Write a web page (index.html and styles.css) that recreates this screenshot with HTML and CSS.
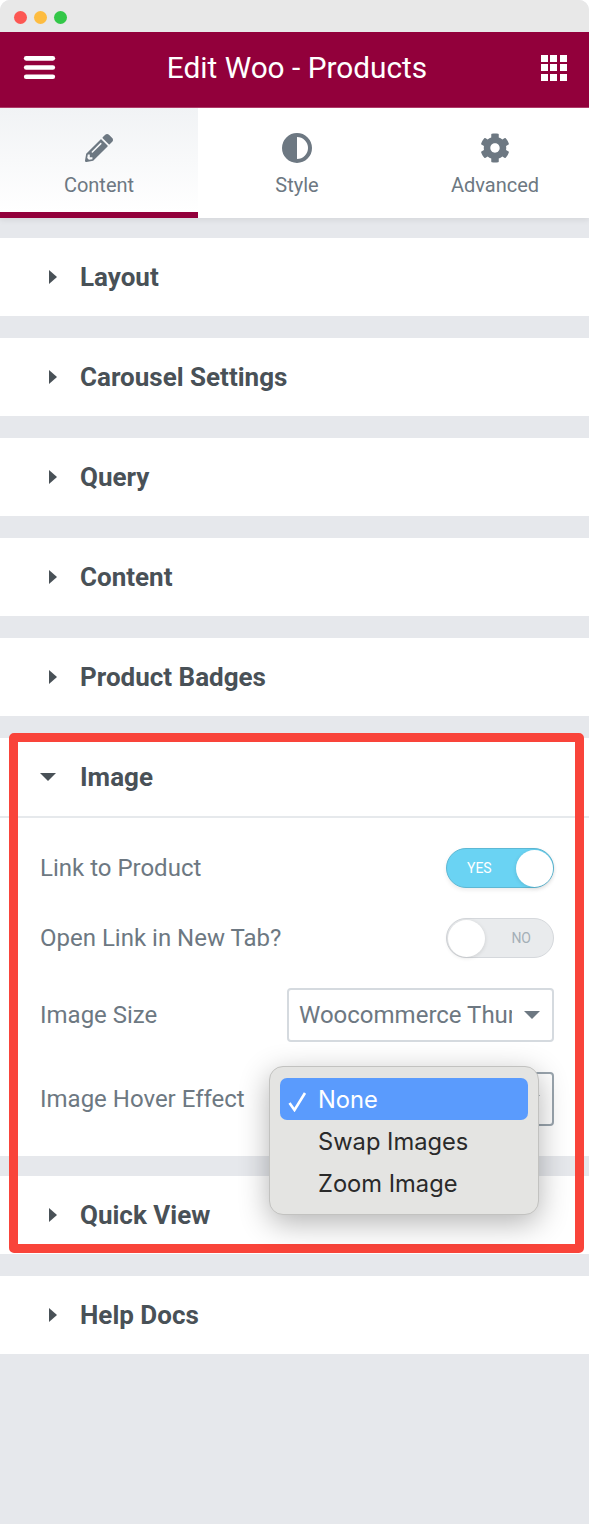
FILE: index.html
```html
<!DOCTYPE html>
<html lang="en">
<head>
    <meta charset="UTF-8">
    <meta name="viewport" content="width=device-width, initial-scale=1.0">
    <title>Edit Woo - Products</title>
    <link rel="stylesheet" href="styles.css">
</head>
<body>
    <div class="window">
        <div class="titlebar">
            <span class="dot dot-red"></span>
            <span class="dot dot-yellow"></span>
            <span class="dot dot-green"></span>
        </div>

        <header class="topbar">
            <svg class="menu-icon" viewBox="0 0 30 24" width="33" height="25">
                <rect x="0" y="1" width="30" height="4.4" rx="2.2"/>
                <rect x="0" y="9.8" width="30" height="4.4" rx="2.2"/>
                <rect x="0" y="18.6" width="30" height="4.4" rx="2.2"/>
            </svg>
            <h1>Edit Woo - Products</h1>
            <div class="apps-icon">
                <i></i><i></i><i></i><i></i><i></i><i></i><i></i><i></i><i></i>
            </div>
        </header>

        <nav class="tabs">
            <div class="tab active">
                <svg viewBox="0 0 512 512" width="28" height="28"><path d="M497.9 142.1l-46.100 46.100c-4.700 4.700-12.300 4.700-17 0l-111-111c-4.700-4.700-4.700-12.300 0-17l46.100-46.100c18.700-18.700 49.100-18.700 67.900 0l60.100 60.100c18.800 18.700 18.800 49.100 0 67.900zM284.200 99.800L21.600 362.400.4 483.900c-2.900 16.400 11.400 30.600 27.800 27.800l121.500-21.300 262.600-262.600c4.700-4.700 4.700-12.300 0-17l-111-111c-4.800-4.700-12.400-4.700-17.100 0zM124.100 339.900c-5.500-5.500-5.500-14.300 0-19.800l154-154c5.500-5.500 14.300-5.500 19.800 0s5.500 14.300 0 19.800l-154 154c-5.500 5.500-14.300 5.500-19.800 0zM88 424h48v36.300l-64.500 11.300-31.100-31.100L51.700 376H88v48z"/></svg>
                <span>Content</span>
            </div>
            <div class="tab">
                <svg viewBox="0 0 30 30" width="30" height="30"><path fill-rule="evenodd" d="M15 0a15 15 0 1 0 0 30a15 15 0 0 0 0-30zM15 4a11 11 0 0 1 0 22z"/></svg>
                <span>Style</span>
            </div>
            <div class="tab">
                <svg viewBox="0 0 512 512" width="30" height="30"><path d="M487.400 315.700l-42.600-24.600c4.300-23.200 4.300-47 0-70.200l42.600-24.600c4.900-2.800 7.100-8.600 5.500-14-11.100-35.600-30-67.800-54.700-94.600-3.800-4.100-10-5.100-14.800-2.300L380.800 110c-17.900-15.400-38.500-27.300-60.800-35.100V25.800c0-5.600-3.900-10.500-9.400-11.700-36.700-8.200-74.300-7.800-109.200 0-5.500 1.200-9.400 6.100-9.400 11.700V75c-22.200 7.900-42.800 19.800-60.800 35.100L88.700 85.500c-4.900-2.800-11-1.900-14.800 2.300-24.700 26.700-43.600 58.900-54.700 94.600-1.700 5.400.6 11.200 5.500 14L67.300 221c-4.300 23.200-4.300 47 0 70.200l-42.600 24.600c-4.900 2.800-7.100 8.600-5.500 14 11.100 35.600 30 67.800 54.700 94.600 3.800 4.100 10 5.100 14.800 2.300l42.600-24.600c17.900 15.400 38.500 27.300 60.800 35.100v49.200c0 5.600 3.900 10.500 9.400 11.700 36.700 8.200 74.300 7.800 109.200 0 5.500-1.200 9.400-6.100 9.400-11.700v-49.200c22.200-7.900 42.800-19.800 60.800-35.100l42.600 24.600c4.900 2.800 11 1.900 14.800-2.300 24.700-26.700 43.600-58.900 54.700-94.600 1.500-5.500-.7-11.300-5.600-14.100zM256 336c-44.100 0-80-35.900-80-80s35.900-80 80-80 80 35.900 80 80-35.900 80-80 80z"/></svg>
                <span>Advanced</span>
            </div>
        </nav>

        <main class="sections">
            <section class="section">
                <div class="section-head"><span class="arrow-right"></span><h2>Layout</h2></div>
            </section>
            <section class="section">
                <div class="section-head"><span class="arrow-right"></span><h2>Carousel Settings</h2></div>
            </section>
            <section class="section">
                <div class="section-head"><span class="arrow-right"></span><h2>Query</h2></div>
            </section>
            <section class="section">
                <div class="section-head"><span class="arrow-right"></span><h2>Content</h2></div>
            </section>
            <section class="section">
                <div class="section-head"><span class="arrow-right"></span><h2>Product Badges</h2></div>
            </section>

            <section class="section section-open">
                <div class="section-head"><span class="arrow-down"></span><h2>Image</h2></div>
                <div class="section-body">
                    <div class="control">
                        <label>Link to Product</label>
                        <div class="switch switch-on"><span>YES</span><b></b></div>
                    </div>
                    <div class="control">
                        <label>Open Link in New Tab?</label>
                        <div class="switch switch-off"><b></b><span>NO</span></div>
                    </div>
                    <div class="control control-select">
                        <label>Image Size</label>
                        <div class="select"><span>Woocommerce Thumbnail</span><em></em></div>
                    </div>
                    <div class="control control-select">
                        <label>Image Hover Effect</label>
                        <div class="select select-open"><span></span><em></em></div>
                    </div>
                </div>
            </section>

            <section class="section">
                <div class="section-head"><span class="arrow-right"></span><h2>Quick View</h2></div>
            </section>
            <section class="section">
                <div class="section-head"><span class="arrow-right"></span><h2>Help Docs</h2></div>
            </section>
        </main>

        <div class="highlight"></div>

        <ul class="popup">
            <li class="selected">
                <svg viewBox="0 0 20 20" width="20" height="20"><path d="M1.500 11L6.500 18L17 1" fill="none" stroke="#fff" stroke-width="2.600"/></svg>
                None
            </li>
            <li>Swap Images</li>
            <li>Zoom Image</li>
        </ul>
    </div>
</body>
</html>
```

FILE: styles.css
```css
* {
    margin: 0;
    padding: 0;
    box-sizing: border-box;
}

body {
    background-color: #fff;
    font-family: 'Roboto', 'Liberation Sans', sans-serif;
}

.window {
    position: relative;
    height: 1524px;
    background-color: #e6e8ec;
    border-radius: 10px 10px 0 0;
    overflow: hidden;
}

.titlebar {
    display: flex;
    align-items: center;
    gap: 7px;
    height: 32px;
    padding: 2px 0 0 14px;
    background-color: #e8e8e8;
}

.dot {
    width: 13px;
    height: 13px;
    border-radius: 50%;
}

.dot-red { background-color: #fc5753; }
.dot-yellow { background-color: #fdbc40; }
.dot-green { background-color: #33c748; }

.topbar {
    display: flex;
    align-items: center;
    justify-content: space-between;
    height: 76px;
    padding: 0 22px 0 23px;
    background-color: #92003b;
    border-bottom: 1px solid #b23c6b;
}

.topbar h1 {
    font-size: 29.8px;
    font-weight: 400;
    color: #fff;
    margin: 0 3px 4px 0;
}

.menu-icon {
    fill: #fff;
    margin-bottom: 4px;
}

.apps-icon {
    display: grid;
    grid-template-columns: repeat(3, 7px);
    grid-auto-rows: 7px;
    gap: 2.5px;
    margin-bottom: 4px;
}

.apps-icon i {
    background-color: #fff;
}

.tabs {
    display: flex;
    height: 110px;
    background-color: #fff;
    box-shadow: 0 2px 6px rgba(0, 0, 0, 0.08);
    overflow: hidden;
}

.tab {
    flex: 0 0 198px;
    display: flex;
    flex-direction: column;
    align-items: center;
    justify-content: flex-start;
    height: 110px;
    padding-top: 25px;
    color: #6d7882;
    font-size: 20px;
}

.tab svg {
    fill: #6d7882;
    height: 30px;
    margin-bottom: 10px;
}

.tab.active {
    background: linear-gradient(#f1f3f5, #fff);
    border-bottom: 6px solid #92003b;
}

.sections {
    display: flex;
    flex-direction: column;
    gap: 22px;
    padding-top: 20px;
}

.section {
    background-color: #fff;
}

.section-head {
    display: flex;
    align-items: center;
    height: 78px;
    color: #495157;
}

.section-head h2 {
    font-size: 26px;
    font-weight: 700;
    margin-left: 23px;
}

.arrow-right {
    width: 0;
    height: 0;
    margin-left: 49px;
    border-left: 8px solid #495157;
    border-top: 7px solid transparent;
    border-bottom: 7px solid transparent;
}

.arrow-down {
    width: 0;
    height: 0;
    margin-left: 40px;
    border-top: 8px solid #495157;
    border-left: 8px solid transparent;
    border-right: 8px solid transparent;
}

.section-open .section-head h2 {
    margin-left: 24px;
}

.section-open {
    margin-bottom: -2px;
}

.section-body {
    height: 340px;
    padding: 30px 35px 0 40px;
    border-top: 2px solid #e6e9ec;
}

.control {
    display: flex;
    align-items: center;
    justify-content: space-between;
    height: 40px;
    margin-bottom: 30px;
    color: #6d7882;
    font-size: 24px;
}

.control-select {
    height: 54px;
}

.control label {
    font-size: 24px;
}

.switch {
    display: flex;
    align-items: center;
    justify-content: space-between;
    width: 108px;
    height: 40px;
    border-radius: 20px;
    font-size: 14px;
}

.switch b {
    width: 37px;
    height: 37px;
    border-radius: 50%;
    background-color: #fff;
    box-shadow: 0 1px 4px rgba(0, 0, 0, 0.12);
}

.switch-on {
    padding: 0 0 0 20px;
    background-color: #6ad3f3;
    border: 1px solid #5db8d4;
    color: #fff;
    box-shadow: 0 2px 4px rgba(0, 0, 0, 0.08);
}

.switch-off {
    padding: 0 22px 0 1px;
    background-color: #e9ebed;
    border: 1px solid #d5d8dc;
    color: #a4afb7;
}

.select {
    display: flex;
    align-items: center;
    justify-content: space-between;
    width: 267px;
    height: 54px;
    padding: 0 12px 0 10px;
    border: 2px solid #d5dadf;
    border-radius: 4px;
    color: #6d7882;
    font-size: 24px;
}

.select-open {
    border-color: #9aa5ae;
}

.select span {
    width: 213px;
    overflow: hidden;
    white-space: nowrap;
}

.select em {
    width: 0;
    height: 0;
    border-top: 8px solid #6d7882;
    border-left: 8px solid transparent;
    border-right: 8px solid transparent;
}

.highlight {
    position: absolute;
    left: 9px;
    top: 733px;
    width: 575px;
    height: 520px;
    border: 9px solid #f9443a;
    border-radius: 5px;
    pointer-events: none;
}

.popup {
    position: absolute;
    left: 269px;
    top: 1066px;
    width: 270px;
    height: 149px;
    padding: 11px 10px 0;
    list-style: none;
    background-color: #e4e4e2;
    border: 1px solid #c2c2c0;
    border-radius: 14px;
    box-shadow: 0 8px 30px rgba(0, 0, 0, 0.3);
    color: #2a2a2a;
    font-family: 'Inter', 'Liberation Sans', sans-serif;
    font-size: 23.7px;
}

.popup li {
    position: relative;
    display: flex;
    align-items: center;
    height: 42px;
    padding-left: 38px;
}

.popup li.selected {
    background-color: #5a9bfd;
    border-radius: 7px;
    color: #fff;
}

.popup li svg {
    position: absolute;
    left: 8px;
    top: 14px;
}
```
